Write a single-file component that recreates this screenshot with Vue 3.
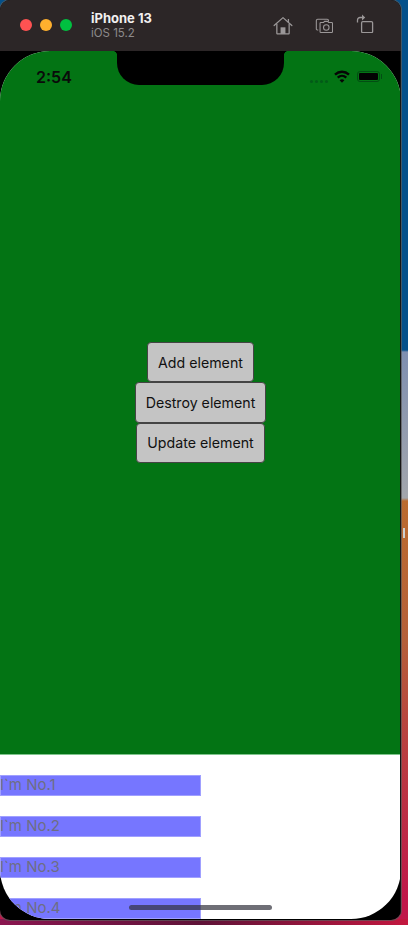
<template>
  <div class="desktop">
    <div class="window">
      <header class="titlebar">
        <div class="lights">
          <span class="light red"></span>
          <span class="light yellow"></span>
          <span class="light green"></span>
        </div>
        <div class="device">
          <div class="device-name">iPhone 13</div>
          <div class="device-os">iOS 15.2</div>
        </div>
        <div class="tools">
          <svg class="tool" width="20" height="19" viewBox="0 0 22 21" fill="none" stroke="#9b9798" stroke-width="1.4">
            <path d="M1.2 10.5 L11 1.8 L20.8 10.5" stroke-linecap="round" stroke-linejoin="round" />
            <path d="M17 3.2 V7.5" />
            <path d="M4.2 8.5 V19 a0.8 0.8 0 0 0 .8 .8 H17 a0.8 0.8 0 0 0 .8 -.8 V8.5" />
            <rect x="8.3" y="12.5" width="5.4" height="7.3" fill="#9b9798" stroke="none" />
          </svg>
          <svg class="tool" width="19" height="16" viewBox="0 0 20 18" fill="none" stroke="#9b9798" stroke-width="1.2">
            <path d="M3 13.5 H2 a1.2 1.2 0 0 1 -1.2 -1.2 V3 A1.6 1.6 0 0 1 2.4 1.4 H13 a1.5 1.5 0 0 1 1.5 1.5 V4" />
            <path d="M5 6 a1 1 0 0 1 1 -1 H9 L10 3.8 H13.6 L14.6 5 H18 a1 1 0 0 1 1 1 V15.4 a1 1 0 0 1 -1 1 H6 a1 1 0 0 1 -1 -1 Z" stroke-linejoin="round" />
            <circle cx="12" cy="10.6" r="3.1" />
          </svg>
          <svg class="tool rotate" width="18" height="19" viewBox="0 0 18 19" fill="none" stroke="#9b9798" stroke-width="1.3">
            <rect x="5.6" y="7.6" width="11" height="11" rx="1.2" />
            <path d="M1.5 8.5 V6 a2.5 2.5 0 0 1 2.5 -2.5 H7" />
            <path d="M6 0.6 L9.2 3.5 L6 6.4 Z" fill="#9b9798" stroke="none" />
          </svg>
        </div>
      </header>

      <div class="screen">
        <div class="phone">
          <div class="notch"></div>
          <div class="status-bar">
            <span class="time">2:54</span>
            <div class="status-icons">
              <div class="signal">
                <i v-for="n in 4" :key="n"></i>
              </div>
              <svg width="16" height="13" viewBox="0 0 16 13" fill="none" stroke="#050505" stroke-width="2.3">
                <path d="M1 4.6 C5 0.8 11 0.8 15 4.6" />
                <path d="M3.7 7.6 C6.2 5.3 9.8 5.3 12.3 7.6" />
                <path d="M8 12.8 L5.6 10.2 C7 9 9 9 10.4 10.2 Z" fill="#050505" stroke="none" />
              </svg>
              <div class="battery"><span></span></div>
            </div>
          </div>

          <section class="stage">
            <button v-for="label in actions" :key="label" class="action" type="button">{{ label }}</button>
          </section>

          <ul class="list">
            <li v-for="n in 4" :key="n" class="list-item">I`m No.{{ n }}</li>
          </ul>

          <div class="home-indicator"></div>
        </div>
      </div>
    </div>
    <span class="grip"></span>
  </div>
</template>

<script setup>
const actions = ['Add element', 'Destroy element', 'Update element']
</script>

<style>
html, body {
  margin: 0;
  background: #7a1440;
}
</style>

<style scoped>
.desktop {
  position: relative;
  width: 408px;
  height: 925px;
  overflow: hidden;
  background:
    linear-gradient(to right, #8a1650 0, #5f1338 200px, #c3173f 408px) bottom / 100% 6px no-repeat,
    linear-gradient(to bottom, #04508a 0, #04508a 350px, #7f8fb0 352px, #a3a6ac 498px, #bb6b2f 501px, #b5603a 640px, #b8463f 720px, #c0174a 900px);
}
.window {
  position: relative;
  width: 401px;
  height: 919.5px;
  display: flex;
  flex-direction: column;
  background: #000;
  border-radius: 10px;
  overflow: hidden;
  box-shadow: 0 0 0 1px rgba(90, 90, 90, 0.7);
}
.window::after {
  content: "";
  position: absolute;
  top: 51px;
  right: 0;
  bottom: 0;
  width: 1px;
  background: #151515;
  pointer-events: none;
}
.titlebar {
  height: 51px;
  flex: none;
  display: flex;
  align-items: center;
  background: #2c2627;
  font-family: Inter, "Liberation Sans", sans-serif;
}
.lights {
  display: flex;
  gap: 8px;
  padding-left: 20px;
  margin-bottom: 1px;
}
.light {
  width: 12px;
  height: 12px;
  border-radius: 50%;
}
.red { background: #ff5252; }
.yellow { background: #ffb02e; }
.green { background: #00c040; }
.device {
  margin-left: 19px;
  width: 182px;
}
.device-name {
  color: #f2f0f0;
  font-size: 13px;
  font-weight: 700;
  line-height: 15px;
}
.device-os {
  color: #8e8b8c;
  font-size: 11.5px;
  line-height: 14px;
}
.tools {
  display: flex;
  align-items: center;
  gap: 22px;
}
.rotate {
  margin-bottom: 4px;
}
.screen {
  flex: 1;
  min-height: 0;
  padding-bottom: 1px;
  display: flex;
}
.phone {
  position: relative;
  flex: 1;
  display: flex;
  flex-direction: column;
  overflow: hidden;
  border-radius: 50px;
  background: #fff;
  font-family: Inter, "Liberation Sans", sans-serif;
}
.notch {
  position: absolute;
  top: 0;
  left: 117px;
  width: 167px;
  height: 34px;
  background: #000;
  border-radius: 0 0 22px 22px;
}
.notch::before,
.notch::after {
  content: "";
  position: absolute;
  top: 0;
  width: 5px;
  height: 5px;
}
.notch::before {
  left: -5px;
  background: radial-gradient(circle at 0 100%, transparent 5px, #000 5.5px);
}
.notch::after {
  right: -5px;
  background: radial-gradient(circle at 100% 100%, transparent 5px, #000 5.5px);
}
.status-bar {
  position: absolute;
  top: 0;
  left: 0;
  right: 0;
  height: 51px;
}
.time {
  position: absolute;
  left: 36px;
  top: 16px;
  font-size: 16px;
  font-weight: 600;
  line-height: 20px;
  color: #0a0a0a;
}
.status-icons {
  position: absolute;
  right: 21px;
  top: 19px;
  display: flex;
  align-items: center;
  gap: 7px;
}
.signal {
  display: flex;
  gap: 2px;
  margin-top: 10px;
  margin-right: -1px;
}
.signal i {
  width: 3px;
  height: 3px;
  border-radius: 50%;
  background: #035a18;
}
.battery {
  position: relative;
  width: 23px;
  height: 11px;
  padding: 1px;
  box-sizing: border-box;
  border: 1px solid #034d14;
  border-radius: 3px;
  display: flex;
}
.battery::after {
  content: "";
  position: absolute;
  right: -3px;
  top: 2px;
  width: 1px;
  height: 5px;
  background: #034d14;
}
.battery span {
  flex: 1;
  background: #030303;
  border-radius: 1px;
}
.stage {
  height: 704px;
  flex: none;
  display: flex;
  flex-direction: column;
  align-items: center;
  justify-content: center;
  background: #037414;
  border-bottom: 1px solid #7fc48c;
  box-sizing: border-box;
}
.action {
  height: 40.4px;
  padding: 0 10px;
  box-sizing: border-box;
  background: #c4c4c4;
  border: 1px solid #444;
  border-radius: 4px;
  color: #111;
  font-family: inherit;
  font-size: 14.2px;
}
.list {
  list-style: none;
  margin: 0;
  padding: 20px 0 0;
  display: flex;
  flex-direction: column;
  gap: 20.5px;
}
.list-item {
  width: 200.5px;
  height: 20.5px;
  line-height: 19px;
  background: #7676ff;
  box-shadow: inset 0 0 0 1px #a0a0ff;
  color: #6e6e84;
  font-size: 15px;
  font-family: Inter, "Liberation Sans", sans-serif;
}
.home-indicator {
  position: absolute;
  left: 129px;
  bottom: 8.5px;
  width: 143px;
  height: 5px;
  border-radius: 3px;
  background: rgba(50, 50, 60, 0.7);
}
.grip {
  position: absolute;
  left: 403px;
  top: 528px;
  width: 2px;
  height: 10px;
  background: #cfcfcf;
}
</style>
